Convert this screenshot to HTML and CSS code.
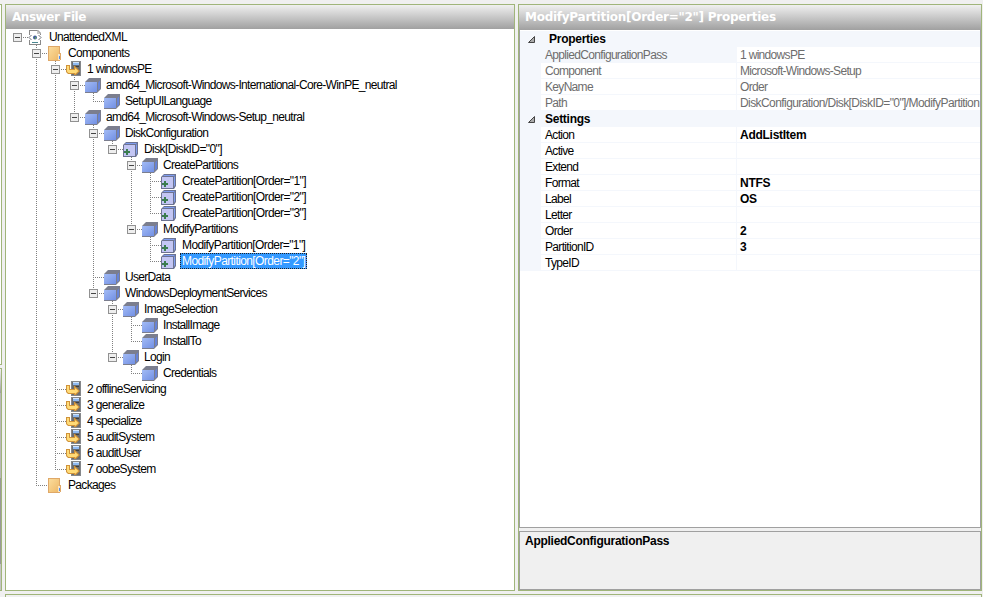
FILE: index.html
```
<!DOCTYPE html>
<html lang="en">

<head>
    <meta charset="UTF-8">
    <meta name="viewport" content="width=device-width, initial-scale=1.0">
    <title>Answer File</title>
    <link rel="stylesheet" href="styles.css">
</head>

<body>

    <!-- icon set -->
    <svg class="icon-defs" width="0" height="0">
        <defs>
            <linearGradient id="cubeFace" x1="0" y1="0" x2="1" y2="1">
                <stop offset="0" stop-color="#a3bbf5" />
                <stop offset="1" stop-color="#7290e4" />
            </linearGradient>
            <linearGradient id="folderFace" x1="0" y1="0" x2="1" y2="1">
                <stop offset="0" stop-color="#fbdc9c" />
                <stop offset="1" stop-color="#eeb968" />
            </linearGradient>
        </defs>
        <symbol id="cube" viewBox="0 0 16 16">
            <path d="M0 5L4 1H16V12L12 16H0Z" fill="#7b7e8e" />
            <path d="M13 5.500L15 3.500V11.500L13 13.500Z" fill="#6683d8" />
            <rect x="0" y="5" width="12" height="10" fill="url(#cubeFace)" />
        </symbol>
        <symbol id="cubeadd" viewBox="0 0 16 16">
            <path d="M0 4L3 1H15V13L13 16H0Z" fill="#6c7391" />
            <path d="M3 2H14L13 3H2Z" fill="#7f9df0" />
            <path d="M13 4L14 3V12L13 14Z" fill="#7f9df0" />
            <rect x="1" y="4" width="11" height="11" fill="#c3c6f4" />
            <path d="M3 8H5V10H7V12H5V14H3V12H1V10H3Z" fill="#3b7d50" />
        </symbol>
        <symbol id="folder" viewBox="0 0 16 16">
            <path d="M1 1H13V8H14V15H13V16H1Z" fill="#dfa868" />
            <path d="M2 2H12V15H2Z" fill="url(#folderFace)" />
            <rect x="11" y="9" width="2" height="6" fill="#f7e3c5" />
            <rect x="12" y="11" width="1" height="3" fill="#4d8df0" />
        </symbol>
        <symbol id="pass" viewBox="0 0 16 16">
            <rect x="5" y="0" width="10" height="15" fill="#85878a" />
            <rect x="6" y="1" width="8" height="13" fill="#6a6d71" />
            <rect x="7" y="1" width="6" height="3" fill="#8db9f2" />
            <rect x="7" y="1" width="6" height="1" fill="#d2e5fb" />
            <rect x="8" y="5" width="5" height="1" fill="#3c3f43" />
            <path d="M0 4H4V8H8V5H9L14 10L10 14H8V13H2L0 11Z" fill="#d0933a" />
            <path d="M1 5H3V9H9V7L12.500 10L9 13V12H2.500L1 10.500Z" fill="#ffdb77" />
        </symbol>
        <symbol id="xml" viewBox="0 0 16 16">
            <path d="M1 1H10L13 4V16H1Z" fill="#898989" />
            <path d="M2 2H9V5H12V15H2Z" fill="#fff" />
            <path d="M9 1L13 5H9Z" fill="#c9c9c9" />
            <rect x="0" y="6" width="14" height="5" fill="#fff" />
            <path d="M3.500 6L1 8.500L3.500 11M10.500 6L13 8.500L10.500 11" fill="none" stroke="#6d7078" />
            <circle cx="7" cy="8.500" r="2" fill="#456196" />
            <rect x="7" y="8" width="1" height="2" fill="#63a35b" />
            <rect x="4" y="13" width="6" height="1" fill="#4a8791" />
        </symbol>
    </svg>

    <div class="window">
        <div class="dock">
            <div class="dock-pane dock-top"></div>
            <div class="dock-pane dock-bottom"></div>
        </div>

        <div class="panel answer-file">
            <h2>Answer File</h2>
            <ul class="tree">
                <li>
                    <div class="node"><span class="toggle"></span><svg class="icon"><use href="#xml" /></svg><span class="label">UnattendedXML</span></div>
                    <ul>
                        <li>
                            <div class="node"><span class="toggle"></span><svg class="icon"><use href="#folder" /></svg><span class="label">Components</span></div>
                            <ul>
                                <li>
                                    <div class="node"><span class="toggle"></span><svg class="icon"><use href="#pass" /></svg><span class="label">1 windowsPE</span></div>
                                    <ul>
                                        <li>
                                            <div class="node"><span class="toggle"></span><svg class="icon"><use href="#cube" /></svg><span class="label">amd64_Microsoft-Windows-International-Core-WinPE_neutral</span></div>
                                            <ul>
                                                <li><div class="node leaf"><svg class="icon"><use href="#cube" /></svg><span class="label">SetupUILanguage</span></div></li>
                                            </ul>
                                        </li>
                                        <li>
                                            <div class="node"><span class="toggle"></span><svg class="icon"><use href="#cube" /></svg><span class="label">amd64_Microsoft-Windows-Setup_neutral</span></div>
                                            <ul>
                                                <li>
                                                    <div class="node"><span class="toggle"></span><svg class="icon"><use href="#cube" /></svg><span class="label">DiskConfiguration</span></div>
                                                    <ul>
                                                        <li>
                                                            <div class="node"><span class="toggle"></span><svg class="icon"><use href="#cubeadd" /></svg><span class="label keyed">Disk[DiskID="0"]</span></div>
                                                            <ul>
                                                                <li>
                                                                    <div class="node"><span class="toggle"></span><svg class="icon"><use href="#cube" /></svg><span class="label">CreatePartitions</span></div>
                                                                    <ul>
                                                                        <li><div class="node leaf"><svg class="icon"><use href="#cubeadd" /></svg><span class="label keyed">CreatePartition[Order="1"]</span></div></li>
                                                                        <li><div class="node leaf"><svg class="icon"><use href="#cubeadd" /></svg><span class="label keyed">CreatePartition[Order="2"]</span></div></li>
                                                                        <li><div class="node leaf"><svg class="icon"><use href="#cubeadd" /></svg><span class="label keyed">CreatePartition[Order="3"]</span></div></li>
                                                                    </ul>
                                                                </li>
                                                                <li>
                                                                    <div class="node"><span class="toggle"></span><svg class="icon"><use href="#cube" /></svg><span class="label">ModifyPartitions</span></div>
                                                                    <ul>
                                                                        <li><div class="node leaf"><svg class="icon"><use href="#cubeadd" /></svg><span class="label keyed">ModifyPartition[Order="1"]</span></div></li>
                                                                        <li><div class="node leaf"><svg class="icon"><use href="#cubeadd" /></svg><span class="label keyed selected">ModifyPartition[Order="2"]</span></div></li>
                                                                    </ul>
                                                                </li>
                                                            </ul>
                                                        </li>
                                                    </ul>
                                                </li>
                                                <li><div class="node leaf"><svg class="icon"><use href="#cube" /></svg><span class="label">UserData</span></div></li>
                                                <li>
                                                    <div class="node"><span class="toggle"></span><svg class="icon"><use href="#cube" /></svg><span class="label">WindowsDeploymentServices</span></div>
                                                    <ul>
                                                        <li>
                                                            <div class="node"><span class="toggle"></span><svg class="icon"><use href="#cube" /></svg><span class="label">ImageSelection</span></div>
                                                            <ul>
                                                                <li><div class="node leaf"><svg class="icon"><use href="#cube" /></svg><span class="label">InstallImage</span></div></li>
                                                                <li><div class="node leaf"><svg class="icon"><use href="#cube" /></svg><span class="label">InstallTo</span></div></li>
                                                            </ul>
                                                        </li>
                                                        <li>
                                                            <div class="node"><span class="toggle"></span><svg class="icon"><use href="#cube" /></svg><span class="label">Login</span></div>
                                                            <ul>
                                                                <li><div class="node leaf"><svg class="icon"><use href="#cube" /></svg><span class="label">Credentials</span></div></li>
                                                            </ul>
                                                        </li>
                                                    </ul>
                                                </li>
                                            </ul>
                                        </li>
                                    </ul>
                                </li>
                                <li><div class="node leaf"><svg class="icon"><use href="#pass" /></svg><span class="label">2 offlineServicing</span></div></li>
                                <li><div class="node leaf"><svg class="icon"><use href="#pass" /></svg><span class="label">3 generalize</span></div></li>
                                <li><div class="node leaf"><svg class="icon"><use href="#pass" /></svg><span class="label">4 specialize</span></div></li>
                                <li><div class="node leaf"><svg class="icon"><use href="#pass" /></svg><span class="label">5 auditSystem</span></div></li>
                                <li><div class="node leaf"><svg class="icon"><use href="#pass" /></svg><span class="label">6 auditUser</span></div></li>
                                <li><div class="node leaf"><svg class="icon"><use href="#pass" /></svg><span class="label">7 oobeSystem</span></div></li>
                            </ul>
                        </li>
                        <li><div class="node leaf"><svg class="icon"><use href="#folder" /></svg><span class="label">Packages</span></div></li>
                    </ul>
                </li>
            </ul>
        </div>

        <div class="panel properties">
            <h2>ModifyPartition[Order="2"] Properties</h2>
            <div class="grid">
                <div class="category first"><svg class="arrow" viewBox="0 0 7 7"><path d="M6.500 0.500V6.500H0.500Z" /></svg><span>Properties</span></div>
                <div class="row readonly current"><span class="name">AppliedConfigurationPass</span><span class="value">1 windowsPE</span></div>
                <div class="row readonly"><span class="name">Component</span><span class="value">Microsoft-Windows-Setup</span></div>
                <div class="row readonly"><span class="name">KeyName</span><span class="value">Order</span></div>
                <div class="row readonly"><span class="name">Path</span><span class="value path">DiskConfiguration/Disk[DiskID="0"]/ModifyPartition</span></div>
                <div class="category"><svg class="arrow" viewBox="0 0 7 7"><path d="M6.500 0.500V6.500H0.500Z" /></svg><span>Settings</span></div>
                <div class="row"><span class="name">Action</span><span class="value">AddListItem</span></div>
                <div class="row"><span class="name">Active</span><span class="value"></span></div>
                <div class="row"><span class="name">Extend</span><span class="value"></span></div>
                <div class="row"><span class="name">Format</span><span class="value">NTFS</span></div>
                <div class="row"><span class="name">Label</span><span class="value">OS</span></div>
                <div class="row"><span class="name">Letter</span><span class="value"></span></div>
                <div class="row"><span class="name">Order</span><span class="value">2</span></div>
                <div class="row"><span class="name">PartitionID</span><span class="value">3</span></div>
                <div class="row"><span class="name">TypeID</span><span class="value"></span></div>
            </div>
            <div class="description">AppliedConfigurationPass</div>
        </div>
    </div>
    <div class="messages"></div>

</body>

</html>
```
FILE: styles.css
```
* {
    box-sizing: border-box;
}

html,
body {
    height: 100%;
    margin: 0;
    overflow: hidden;
    background-color: #f0f0f0;
    font-family: "Liberation Sans", Arial, sans-serif;
    font-size: 12px;
    line-height: 16px;
    letter-spacing: -0.68px;
    color: #000;
}

ul {
    list-style: none;
    margin: 0;
    padding: 0;
}

.icon-defs {
    display: block;
}

.window {
    display: flex;
    height: 591px;
    padding-top: 4px;
}

.dock {
    display: flex;
    flex-direction: column;
    gap: 3px;
    width: 2px;
    margin-right: 3px;
}

.dock-pane {
    border: 1px solid #a0b57a;
    border-left: none;
}

.dock-top {
    height: 361px;
    background: #fff;
}

.dock-bottom {
    flex: 1;
    background: linear-gradient(#f0f0f0, #a0a0a0 24px, #b8b8b8 24px, #b8b8b8 109px, #999 109px, #999 195px, #c4c4c4 195px);
}

.panel {
    border: 1px solid #a0b57a;
    background: #fff;
}

.panel h2 {
    margin: 0;
    height: 24px;
    padding-left: 6px;
    background: linear-gradient(#f0f0f0, #a0a0a0);
    color: #fff;
    font-family: "DejaVu Sans", Verdana, sans-serif;
    font-size: 12px;
    line-height: 25px;
    letter-spacing: -0.45px;
    white-space: nowrap;
}

.answer-file {
    width: 510px;
    margin-right: 3px;
}

/* tree */
.tree {
    padding-left: 7px;
}

.tree ul {
    padding-left: 19px;
}

.tree ul > li {
    background: repeating-linear-gradient(#808080 0 1px, transparent 1px 2px) 4px 0 / 1px 100% no-repeat;
}

.tree ul > li:last-child {
    background-size: 1px 9px;
}

.node {
    display: flex;
    align-items: center;
    height: 16px;
    background: repeating-linear-gradient(90deg, #808080 0 1px, transparent 1px 2px) 4px 8px / 12px 1px no-repeat;
}

.node.leaf {
    padding-left: 9px;
}

.toggle {
    width: 9px;
    height: 9px;
    margin-top: 1px;
    border: 1px solid #919191;
    background: linear-gradient(#444, #444) center / 5px 1px no-repeat #eee;
}

.icon {
    width: 16px;
    height: 16px;
    margin-left: 6px;
    flex: none;
}

.label {
    margin-left: 3px;
    padding: 0 2px;
    line-height: 16px;
    white-space: nowrap;
}

.label.keyed {
    letter-spacing: -0.6px;
}

.label.selected {
    background: #3399ff;
    color: #fff;
    outline: 1px dotted #222;
    outline-offset: -1px;
}

/* property grid */
.properties {
    display: flex;
    flex-direction: column;
    width: 464px;
    background: #f0f0f0;
}

.properties h2 {
    height: 25px;
    letter-spacing: -0.26px;
}

.grid {
    height: 498px;
    padding-top: 1px;
    border: 1px solid #a0a0a0;
    border-top: none;
    background: #fff;
}

.grid .category {
    display: flex;
    align-items: center;
    height: 16px;
    padding-left: 8px;
    background: #f4f7fc;
    font-weight: bold;
    letter-spacing: -0.27px;
}

.category span {
    margin-left: 10px;
}

.category.first span {
    margin-left: 14px;
}

.arrow {
    width: 7px;
    height: 7px;
    fill: #aaa;
    stroke: #444;
}

.row {
    display: flex;
    height: 16px;
    padding-left: 21px;
    background: #f4f7fc;
}

.row .name {
    width: 195px;
    height: 15px;
    padding-left: 4px;
    background: #fff;
}

.row .value {
    flex: 1;
    height: 15px;
    margin-left: 1px;
    padding-left: 3px;
    background: #fff;
    font-weight: bold;
    letter-spacing: -0.27px;
    white-space: nowrap;
    overflow: hidden;
}

.row.readonly {
    color: #6d6d6d;
}

.row.readonly .value {
    font-weight: normal;
    letter-spacing: -0.68px;
}

.row.readonly .value.path {
    letter-spacing: -0.58px;
}

.row.current .name {
    background: #f4f7fc;
}

.description {
    flex: 1;
    margin-top: 3px;
    padding: 1px 5px;
    border: 1px solid #a0a0a0;
    font-weight: bold;
    letter-spacing: -0.27px;
}

.messages {
    height: 20px;
    width: 977px;
    margin: 3px 0 0 5px;
    border: 1px solid #a0b57a;
}
```
